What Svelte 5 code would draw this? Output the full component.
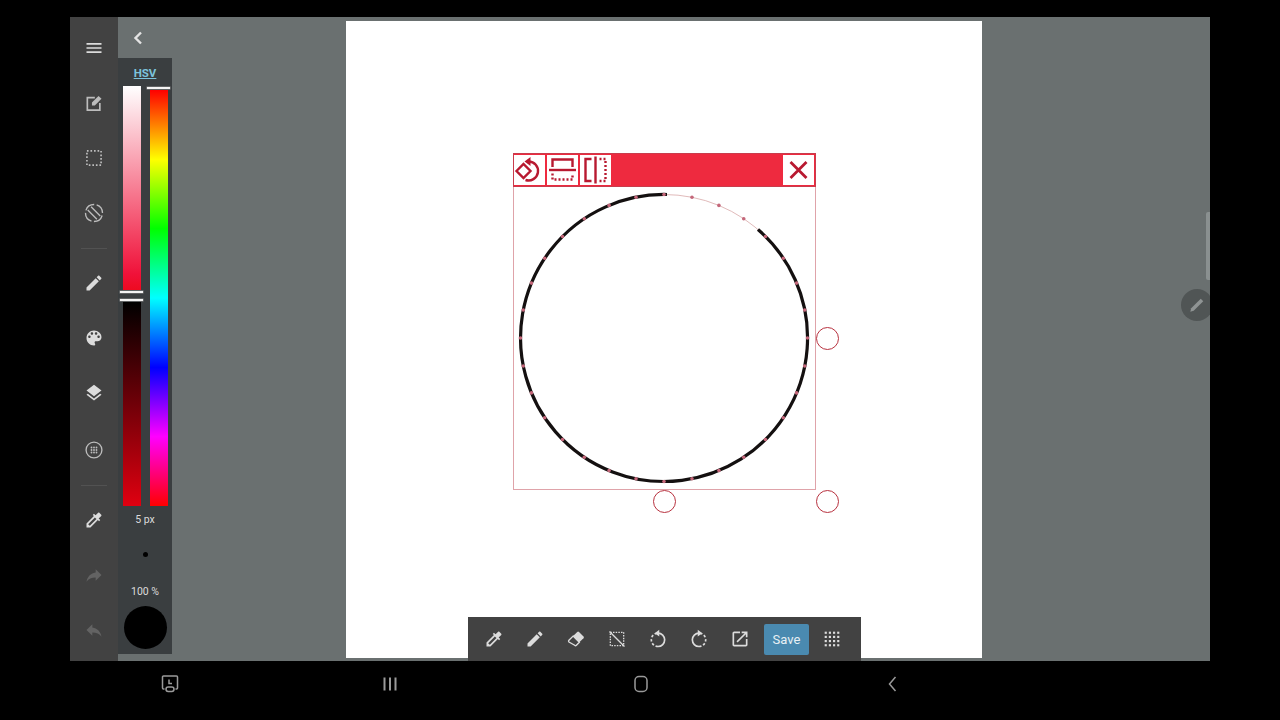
<script>
  const d = {
    menu: 'M3 18h18v-2H3v2zm0-5h18v-2H3v2zm0-7v2h18V6H3z',
    pencil: 'M3 17.25V21h3.75L17.81 9.94l-3.75-3.75L3 17.25zM20.71 7.04c.39-.39.39-1.02 0-1.41l-2.34-2.34c-.39-.39-1.02-.39-1.41 0l-1.83 1.83 3.75 3.75 1.83-1.83z',
    palette: 'M12 3c-4.97 0-9 4.03-9 9s4.03 9 9 9c.83 0 1.5-.67 1.5-1.5 0-.39-.15-.74-.39-1.01-.23-.26-.38-.61-.38-.99 0-.83.67-1.5 1.5-1.5H16c2.76 0 5-2.24 5-5 0-4.42-4.03-8-9-8zm-5.5 9c-.83 0-1.5-.67-1.5-1.5S5.67 9 6.5 9 8 9.67 8 10.5 7.33 12 6.5 12zm3-4C8.67 8 8 7.33 8 6.5S8.67 5 9.5 5s1.5.67 1.5 1.5S10.33 8 9.5 8zm5 0c-.83 0-1.5-.67-1.5-1.5S13.67 5 14.5 5s1.5.67 1.5 1.5S15.33 8 14.5 8zm3 4c-.83 0-1.5-.67-1.5-1.5S16.67 9 17.5 9s1.5.67 1.5 1.5-.67 1.5-1.5 1.5z',
    layers: 'M11.99 18.54l-7.37-5.73L3 14.07l9 7 9-7-1.63-1.27-7.38 5.74zM12 16l7.36-5.73L21 9l-9-7-9 7 1.63 1.27L12 16z',
    dropper: 'M20.71 5.63l-2.34-2.34c-.39-.39-1.02-.39-1.41 0l-3.12 3.12-1.93-1.91-1.41 1.41 1.42 1.42L3 16.25V21h4.75l8.92-8.92 1.42 1.42 1.41-1.41-1.92-1.92 3.12-3.12c.4-.4.4-1.03.01-1.42zM6.92 19L5 17.08l8.06-8.06 1.92 1.92L6.92 19z',
    redo: 'M14 9V5l7 7-7 7v-4.1c-5 0-8.5 1.6-11 5.1 1-5 4-10 11-11z',
    undo: 'M10 9V5l-7 7 7 7v-4.1c5 0 8.5 1.6 11 5.1-1-5-4-10-11-11z',
    open: 'M19 19H5V5h7V3H5c-1.11 0-2 .9-2 2v14c0 1.1.89 2 2 2h14c1.1 0 2-.9 2-2v-7h-2v7zM14 3v2h3.59l-9.83 9.83 1.41 1.41L19 6.41V10h2V3h-7z'
  };

  // control points of the circle, one every 11.25deg
  const cx = 151, cy = 185, r = 143.5;
  const dots = Array.from({ length: 32 }, (_, i) => {
    const a = (i * Math.PI) / 16;
    return { x: cx + r * Math.sin(a), y: cy - r * Math.cos(a) };
  });
  const gridDots = [0, 1, 2, 3].flatMap((y) => [0, 1, 2, 3].map((x) => ({ x: 4.5 + x * 5, y: 4.5 + y * 5 })));
</script>

<div class="screen">
  <aside class="sidebar">
    <button class="side-btn" aria-label="Menu"><svg viewBox="0 0 24 24"><path d={d.menu} /></svg></button>
    <button class="side-btn" aria-label="Edit">
      <svg viewBox="0 0 24 24">
        <path class="line soft" d="M13 5.5H4V20.5H19V12" />
        <path class="soft-fill" d="M9.500 11.500V15H13L21 7l-3.500-3.500z" />
      </svg>
    </button>
    <button class="side-btn" aria-label="Select">
      <svg viewBox="0 0 24 24"><rect class="line soft" x="3.5" y="3.5" width="17" height="17" stroke-dasharray="2 2.250" /></svg>
    </button>
    <button class="side-btn" aria-label="Rotate">
      <svg viewBox="0 0 24 24">
        <circle class="line thin soft" cx="12" cy="12" r="10.200" stroke-dasharray="13 3" stroke-dashoffset="-3" />
        <path class="line thin soft" d="M4.500 8.500 15.500 19.500M8.500 4.500 19.500 15.500" />
      </svg>
    </button>
    <div class="sep"></div>
    <button class="side-btn" aria-label="Pencil"><svg viewBox="0 0 24 24"><path d={d.pencil} /></svg></button>
    <button class="side-btn" aria-label="Colors"><svg viewBox="0 0 24 24"><path d={d.palette} /></svg></button>
    <button class="side-btn" aria-label="Layers"><svg viewBox="0 0 24 24"><path d={d.layers} /></svg></button>
    <button class="side-btn grid-gap" aria-label="Grid">
      <svg viewBox="0 0 24 24">
        <circle class="line thin soft" cx="12" cy="12" r="9.500" />
        {#each [9, 12, 15] as y}
          {#each [9, 12, 15] as x}
            <circle class="soft-fill" cx={x} cy={y} r="1.100" />
          {/each}
        {/each}
      </svg>
    </button>
    <div class="sep"></div>
    <button class="side-btn" aria-label="Dropper"><svg viewBox="0 0 24 24"><path d={d.dropper} /></svg></button>
    <button class="side-btn dim" aria-label="Redo"><svg viewBox="0 0 24 24"><path d={d.redo} /></svg></button>
    <button class="side-btn dim" aria-label="Undo"><svg viewBox="0 0 24 24"><path d={d.undo} /></svg></button>
  </aside>

  <main class="stage">
    <div class="canvas">
      <div class="selection">
        <div class="sel-bar">
          <button class="sel-btn" aria-label="Rotate">
            <svg viewBox="0 0 30 30">
              <path d="M2 16 9 9 16 16 9 23z" />
              <path d="M14 6.500A9.500 9.500 0 1 1 11 25" />
              <path class="head" d="M16 2 10 6.500 16 11z" />
            </svg>
          </button>
          <button class="sel-btn" aria-label="Flip vertical">
            <svg viewBox="0 0 30 30">
              <path d="M5 12V4.500H25V12" />
              <path d="M1.500 15H28.500" />
              <path class="dotted" d="M5 18.500V24.500H25V18.500" />
            </svg>
          </button>
          <button class="sel-btn" aria-label="Flip horizontal">
            <svg viewBox="0 0 30 30">
              <path d="M11 4H5V26H11" />
              <path d="M15 1.500V28.500" />
              <path class="dotted" d="M19 4H25V26H19" />
            </svg>
          </button>
          <div class="sel-spacer"></div>
          <button class="sel-btn close" aria-label="Close">
            <svg viewBox="0 0 30 30"><path class="x" d="M7 7 23 23M23 7 7 23" /></svg>
          </button>
        </div>

        <svg class="stroke" viewBox="0 0 303 337" aria-hidden="true">
          <circle cx={cx} cy={cy} r={r} class="guide" />
          <path class="ink" d="M {cx + 3} {cy - r} A {r} {r} 0 1 0 {cx + 94} {cy - 108.500}" />
          {#each dots as p}
            <circle cx={p.x} cy={p.y} r="1.800" class="dot" />
          {/each}
        </svg>

        <span class="handle h-right"></span>
        <span class="handle h-bottom"></span>
        <span class="handle h-corner"></span>
      </div>
    </div>

    <button class="back" aria-label="Collapse">
      <svg viewBox="0 0 12 16"><path d="M9 2.500 3.500 8 9 13.500" /></svg>
    </button>

    <section class="panel">
      <div class="hsv">HSV</div>
      <div class="sliders">
        <div class="sv-col">
          <div class="sat"></div>
          <div class="knob"></div>
          <div class="gap"></div>
          <div class="knob"></div>
          <div class="val"></div>
        </div>
        <div class="hue-col">
          <div class="knob"></div>
          <div class="hue"></div>
        </div>
      </div>
      <div class="label size-label">5 px</div>
      <div class="size-dot"></div>
      <div class="label alpha-label">100 %</div>
      <div class="swatch"></div>
    </section>

    <div class="toolbar">
      <button class="tool" aria-label="Dropper"><svg viewBox="0 0 24 24"><path d={d.dropper} /></svg></button>
      <button class="tool" aria-label="Pencil"><svg viewBox="0 0 24 24"><path d={d.pencil} /></svg></button>
      <button class="tool" aria-label="Eraser">
        <svg viewBox="0 0 24 24">
          <path d="M13.500 3.500a1.500 1.500 0 0 1 2.100 0l5.400 5.400a1.500 1.500 0 0 1 0 2.100l-5 5-7.500-7.500z" />
          <path class="line thin" d="M8.500 8.500 16 16l-3.500 3.500a1.500 1.500 0 0 1-2.100 0L3.500 15.600a1.500 1.500 0 0 1 0-2.100z" />
        </svg>
      </button>
      <button class="tool" aria-label="Deselect">
        <svg viewBox="0 0 24 24">
          <rect class="line thin" x="4" y="4" width="16" height="16" stroke-dasharray="1.800 1.400" />
          <path class="line thin" d="M3 3 21 21" />
        </svg>
      </button>
      <button class="tool" aria-label="Undo">
        <svg viewBox="0 0 24 24">
          <path class="line" d="M12 5a8 8 0 0 1 0 16" />
          <path class="line" d="M12 21A8 8 0 0 1 12 5" stroke-dasharray="3 2.200" />
          <path d="M13.500 1 8 5l5.500 4z" />
        </svg>
      </button>
      <button class="tool" aria-label="Redo">
        <svg viewBox="0 0 24 24">
          <g transform="matrix(-1 0 0 1 24 0)">
            <path class="line" d="M12 5a8 8 0 0 1 0 16" />
            <path class="line" d="M12 21A8 8 0 0 1 12 5" stroke-dasharray="3 2.200" />
            <path d="M13.500 1 8 5l5.500 4z" />
          </g>
        </svg>
      </button>
      <button class="tool" aria-label="Export"><svg viewBox="0 0 24 24"><path d={d.open} /></svg></button>
      <button class="save">Save</button>
      <button class="tool" aria-label="More">
        <svg viewBox="0 0 24 24">
          {#each gridDots as p}
            <rect x={p.x - 1.300} y={p.y - 1.300} width="2.600" height="2.600" />
          {/each}
        </svg>
      </button>
    </div>

    <div class="scrollbar"></div>
    <button class="fab" aria-label="Draw">
      <svg viewBox="0 0 24 24"><path d="M4 20 5 16 16.500 4.500 19.500 7.500 8 19z" /></svg>
    </button>
  </main>
</div>

<nav class="nav">
  <span class="nav-item" aria-label="Screenshot">
    <svg viewBox="0 0 18 18">
      <path d="M3.500 14H2.500a1 1 0 0 1-1-1V2a1 1 0 0 1 1-1h13a1 1 0 0 1 1 1v11a1 1 0 0 1-1 1h-1" />
      <path d="M8 4.500V8.500H11" />
      <rect x="5" y="12" width="8" height="4.500" rx="2.200" />
    </svg>
  </span>
  <span class="nav-item" aria-label="Recents">
    <svg viewBox="0 0 18 18"><path class="bars" d="M3.500 2.500V15.500M9 2.500V15.500M14.500 2.500V15.500" /></svg>
  </span>
  <span class="nav-item" aria-label="Home">
    <svg viewBox="0 0 18 18"><rect x="3" y="1.500" width="12" height="15" rx="4" /></svg>
  </span>
  <span class="nav-item" aria-label="Back">
    <svg viewBox="0 0 18 18"><path d="M12.500 2 6.500 9 12.500 16" /></svg>
  </span>
</nav>

<style>
  :global(body) {
    background: #000;
    font-family: Roboto, "Liberation Sans", sans-serif;
  }

  button {
    background: none;
    border: none;
    padding: 0;
    cursor: pointer;
  }

  svg {
    display: block;
  }

  .screen {
    display: flex;
    width: 1140px;
    height: 644px;
    margin: 17px 0 0 70px;
    background: #6a7070;
    overflow: hidden;
  }

  .sidebar {
    flex: 0 0 48px;
    display: flex;
    flex-direction: column;
    align-items: center;
    padding-top: 3.500px;
    background: #424242;
  }

  .side-btn {
    flex: 0 0 55px;
    display: flex;
    align-items: center;
    justify-content: center;
  }
  .side-btn svg {
    width: 20px;
    height: 20px;
    fill: #dcdcdc;
  }
  .side-btn.dim svg {
    fill: #636363;
  }
  .grid-gap {
    margin-top: 2px;
  }

  .sep {
    flex: 0 0 1px;
    width: 26px;
    margin: 7px 0;
    background: #525252;
  }

  .line {
    fill: none;
    stroke: #dcdcdc;
    stroke-width: 2;
  }
  .line.thin {
    stroke-width: 1.600;
  }
  .line.soft {
    stroke: #bdbdbd;
  }
  .side-btn svg .soft-fill {
    fill: #bdbdbd;
  }

  .stage {
    position: relative;
    flex: 1;
    display: flex;
    justify-content: center;
    align-items: flex-start;
  }

  .canvas {
    position: relative;
    width: 636px;
    height: 637px;
    margin-top: 4px;
    background: #fff;
  }

  .selection {
    position: absolute;
    left: 167px;
    top: 132px;
    width: 303px;
    height: 337px;
    box-sizing: border-box;
    border: 1px solid #dfa3a9;
  }

  .sel-bar {
    display: flex;
    gap: 2px;
    height: 34px;
    margin: -1px -1px 0;
    padding: 1px 0;
    box-sizing: border-box;
    background: #ee2a3f;
    border: 1px solid #c93c4c;
  }

  .sel-btn {
    flex: 0 0 31px;
    height: 100%;
    background: #fff;
  }
  .sel-btn.close {
    margin-right: 1px;
  }
  .sel-btn svg {
    width: 100%;
    height: 100%;
    fill: none;
    stroke: #b81930;
    stroke-width: 2.400;
  }
  .sel-btn .head {
    fill: #b81930;
    stroke: none;
  }
  .sel-btn .dotted {
    stroke-dasharray: 2 2;
  }
  .sel-btn .x {
    stroke-width: 2.800;
  }

  .sel-spacer {
    flex: 1;
  }

  .stroke {
    position: absolute;
    left: -1px;
    top: -1px;
    width: 303px;
    height: 337px;
    pointer-events: none;
  }

  .guide {
    fill: none;
    stroke: #d8a8a8;
    stroke-width: 0.800;
  }
  .ink {
    fill: none;
    stroke: #141010;
    stroke-width: 3.200;
  }
  .dot {
    fill: #c4677a;
  }

  .handle {
    position: absolute;
    width: 23px;
    height: 23px;
    box-sizing: border-box;
    border: 1.800px solid #b8323f;
    border-radius: 50%;
    background: #fff;
  }
  .h-right {
    left: 301.500px;
    top: 172.500px;
  }
  .h-bottom {
    left: 138.500px;
    top: 335.500px;
  }
  .h-corner {
    left: 301.500px;
    top: 335.500px;
  }

  .back {
    position: absolute;
    left: 14px;
    top: 13px;
    width: 12px;
    height: 16px;
  }
  .back svg {
    width: 12px;
    height: 16px;
    fill: none;
    stroke: #e4e4e4;
    stroke-width: 2.400;
  }

  .panel {
    position: absolute;
    left: 0;
    top: 41px;
    width: 54px;
    height: 596px;
    display: flex;
    flex-direction: column;
    align-items: center;
    background: #3a3e40;
    color: #e0e0e0;
  }

  .hsv {
    margin-top: 9px;
    height: 13px;
    font-size: 11.500px;
    line-height: 13px;
    font-weight: 700;
    color: #7cc3db;
    text-decoration: underline;
  }

  .sliders {
    display: flex;
    gap: 9px;
    margin-top: 6px;
    height: 420px;
    width: 45px;
  }

  .sv-col,
  .hue-col {
    flex: 0 0 18px;
    width: 18px;
    min-width: 0;
    display: flex;
    flex-direction: column;
    align-items: center;
  }

  .sat {
    width: 18px;
    flex: 0 0 204px;
    background: linear-gradient(#fff, #f0123a 92%, #ee0a20);
  }
  .gap {
    flex: 0 0 4px;
  }
  .val {
    width: 18px;
    flex: 1;
    background: linear-gradient(#000, #e00010);
  }
  .knob {
    flex: 0 0 2px;
    width: 23px;
    margin: 1px 0;
    background: #f4f4f4;
    box-shadow: 0 0 0 0.500px #888;
  }
  .hue {
    width: 18px;
    flex: 1;
    background: linear-gradient(#f00 0%, #ff0 16.700%, #0f0 33.300%, #0ff 50%, #00f 66.700%, #f0f 83.300%, #f00 100%);
  }

  .label {
    font-size: 10.500px;
    line-height: 12px;
    color: #dcdcdc;
  }
  .size-label {
    margin-top: 8px;
  }
  .size-dot {
    width: 5px;
    height: 5px;
    margin-top: 26px;
    border-radius: 50%;
    background: #000;
  }
  .alpha-label {
    margin-top: 29px;
  }
  .swatch {
    width: 43px;
    height: 43px;
    margin-top: 8px;
    border-radius: 50%;
    background: #000;
  }

  .toolbar {
    position: absolute;
    left: 350px;
    bottom: 0;
    width: 393px;
    height: 44px;
    box-sizing: border-box;
    padding: 0 5.500px;
    display: flex;
    align-items: center;
    background: #424242;
  }

  .tool {
    flex: 0 0 41px;
    display: flex;
    justify-content: center;
  }
  .tool svg {
    width: 20px;
    height: 20px;
    fill: #dcdcdc;
  }

  .save {
    flex: 0 0 45px;
    height: 31px;
    margin: 0 2.500px 0 3.500px;
    border-radius: 2px;
    background: #4a8ab0;
    color: #e8f0f4;
    font: 13px Roboto, sans-serif;
  }

  .scrollbar {
    position: absolute;
    right: 0;
    top: 195px;
    width: 4px;
    height: 68px;
    border-radius: 2px 0 0 2px;
    background: #8a9090;
  }

  .fab {
    position: absolute;
    left: 1063px;
    top: 272px;
    width: 32px;
    height: 32px;
    display: flex;
    align-items: center;
    justify-content: center;
    border-radius: 50%;
    background: #505555;
  }
  .fab svg {
    width: 20px;
    height: 20px;
    fill: #8f9494;
  }

  .nav {
    display: flex;
    height: 59px;
    padding: 14px 0 0 161px;
    box-sizing: border-box;
    gap: 233px;
  }
  .nav-item {
    width: 18px;
    height: 18px;
  }
  .nav-item:first-child {
    margin-right: -31px;
  }
  .nav-item svg {
    width: 18px;
    height: 18px;
    fill: none;
    stroke: #9a9a9a;
    stroke-width: 1.500;
  }
  .nav-item svg .bars {
    stroke-width: 2;
  }
</style>
